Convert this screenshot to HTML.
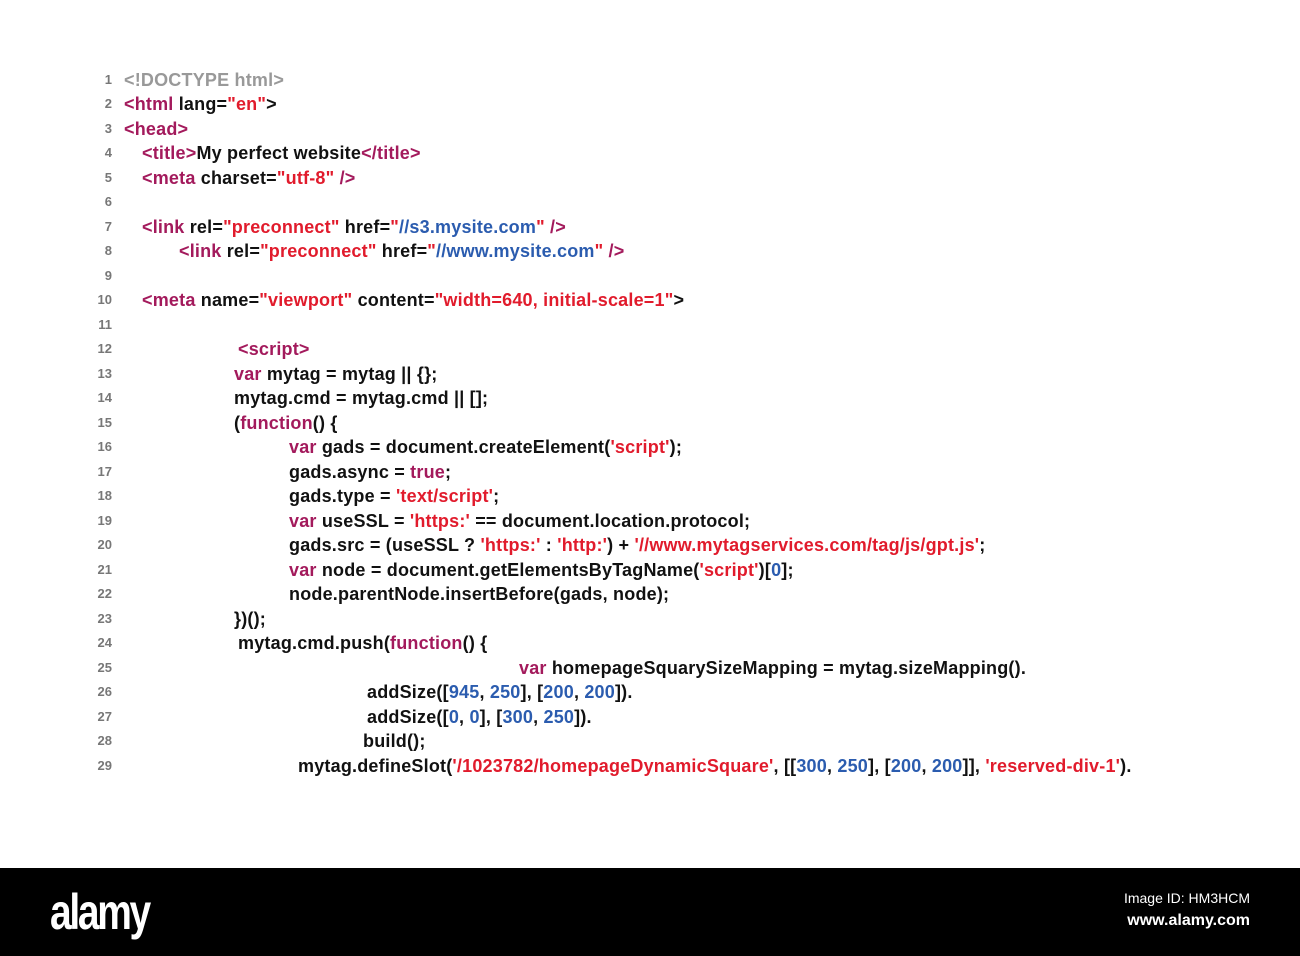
<!DOCTYPE html>
<html><head><style>
body{margin:0;width:1300px;height:956px;background:#fff;position:relative;overflow:hidden;font-family:"Liberation Sans",sans-serif}
.l{position:absolute;font-size:18px;letter-spacing:0.2px;font-weight:bold;color:#111;white-space:pre;line-height:20px;margin-top:1px}
.n{position:absolute;width:30px;left:82px;text-align:right;font-size:13px;color:#777;font-weight:bold;line-height:20px;margin-top:1px}
.t{color:#a31a5c}.s{color:#e11b2c}.b{color:#2b5caf}.g{color:#999}
.foot{position:absolute;left:0;top:868px;width:1300px;height:88px;background:#000}
</style></head><body>
<div class="n" style="top:69px">1</div><div class="l g" style="left:124px;top:69px">&lt;!DOCTYPE html&gt;</div>
<div class="n" style="top:93px">2</div><div class="l" style="left:124px;top:93px"><span class="t">&lt;html</span> lang=<span class="s">"en"</span>&gt;</div>
<div class="n" style="top:118px">3</div><div class="l t" style="left:124px;top:118px">&lt;head&gt;</div>
<div class="n" style="top:142px">4</div><div class="l" style="left:142px;top:142px"><span class="t">&lt;title&gt;</span>My perfect website<span class="t">&lt;/title&gt;</span></div>
<div class="n" style="top:167px">5</div><div class="l" style="left:142px;top:167px"><span class="t">&lt;meta</span> charset=<span class="s">"utf-8"</span> <span class="t">/&gt;</span></div>
<div class="n" style="top:191px">6</div>
<div class="n" style="top:216px">7</div><div class="l" style="left:142px;top:216px"><span class="t">&lt;link</span> rel=<span class="s">"preconnect"</span> href=<span class="s">"</span><span class="b">//s3.mysite.com</span><span class="s">"</span> <span class="t">/&gt;</span></div>
<div class="n" style="top:240px">8</div><div class="l" style="left:179px;top:240px"><span class="t">&lt;link</span> rel=<span class="s">"preconnect"</span> href=<span class="s">"</span><span class="b">//www.mysite.com</span><span class="s">"</span> <span class="t">/&gt;</span></div>
<div class="n" style="top:265px">9</div>
<div class="n" style="top:289px">10</div><div class="l" style="left:142px;top:289px"><span class="t">&lt;meta</span> name=<span class="s">"viewport"</span> content=<span class="s">"width=640, initial-scale=1"</span>&gt;</div>
<div class="n" style="top:314px">11</div>
<div class="n" style="top:338px">12</div><div class="l t" style="left:238px;top:338px">&lt;script&gt;</div>
<div class="n" style="top:363px">13</div><div class="l" style="left:234px;top:363px"><span class="t">var</span> mytag = mytag || {};</div>
<div class="n" style="top:387px">14</div><div class="l" style="left:234px;top:387px">mytag.cmd = mytag.cmd || [];</div>
<div class="n" style="top:412px">15</div><div class="l" style="left:234px;top:412px">(<span class="t">function</span>() {</div>
<div class="n" style="top:436px">16</div><div class="l" style="left:289px;top:436px"><span class="t">var</span> gads = document.createElement(<span class="s">'script'</span>);</div>
<div class="n" style="top:461px">17</div><div class="l" style="left:289px;top:461px">gads.async = <span class="t">true</span>;</div>
<div class="n" style="top:485px">18</div><div class="l" style="left:289px;top:485px">gads.type = <span class="s">'text/script'</span>;</div>
<div class="n" style="top:510px">19</div><div class="l" style="left:289px;top:510px"><span class="t">var</span> useSSL = <span class="s">'https:'</span> == document.location.protocol;</div>
<div class="n" style="top:534px">20</div><div class="l" style="left:289px;top:534px">gads.src = (useSSL ? <span class="s">'https:'</span> : <span class="s">'http:'</span>) + <span class="s">'//www.mytagservices.com/tag/js/gpt.js'</span>;</div>
<div class="n" style="top:559px">21</div><div class="l" style="left:289px;top:559px"><span class="t">var</span> node = document.getElementsByTagName(<span class="s">'script'</span>)[<span class="b">0</span>];</div>
<div class="n" style="top:583px">22</div><div class="l" style="left:289px;top:583px">node.parentNode.insertBefore(gads, node);</div>
<div class="n" style="top:608px">23</div><div class="l" style="left:234px;top:608px">})();</div>
<div class="n" style="top:632px">24</div><div class="l" style="left:238px;top:632px">mytag.cmd.push(<span class="t">function</span>() {</div>
<div class="n" style="top:657px">25</div><div class="l" style="left:519px;top:657px"><span class="t">var</span> homepageSquarySizeMapping = mytag.sizeMapping().</div>
<div class="n" style="top:681px">26</div><div class="l" style="left:367px;top:681px">addSize([<span class="b">945</span>, <span class="b">250</span>], [<span class="b">200</span>, <span class="b">200</span>]).</div>
<div class="n" style="top:706px">27</div><div class="l" style="left:367px;top:706px">addSize([<span class="b">0</span>, <span class="b">0</span>], [<span class="b">300</span>, <span class="b">250</span>]).</div>
<div class="n" style="top:730px">28</div><div class="l" style="left:363px;top:730px">build();</div>
<div class="n" style="top:755px">29</div><div class="l" style="left:298px;top:755px">mytag.defineSlot(<span class="s">'/1023782/homepageDynamicSquare'</span>, [[<span class="b">300</span>, <span class="b">250</span>], [<span class="b">200</span>, <span class="b">200</span>]], <span class="s">'reserved-div-1'</span>).</div>
<div class="foot">
<div style="position:absolute;left:50px;top:14px;color:#fff;font-size:50px;font-weight:bold;letter-spacing:-3px;transform:scaleX(0.78);transform-origin:left;line-height:60px">alamy</div>
<div style="position:absolute;right:50px;top:22px;color:#fff;font-size:14px">Image ID: HM3HCM</div>
<div style="position:absolute;right:50px;top:44px;color:#fff;font-size:16px;font-weight:bold">www.alamy.com</div>
</div>
</body></html>
